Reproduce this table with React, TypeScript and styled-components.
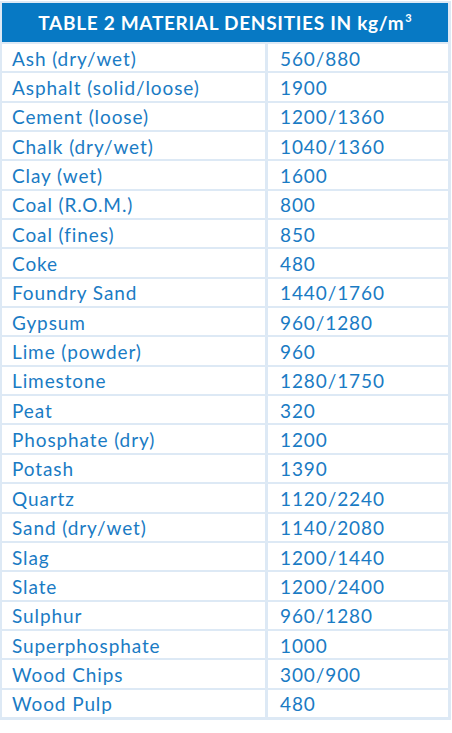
import styled, { createGlobalStyle } from "styled-components";

const rows: [string, string][] = [
  ["Ash (dry/wet)", "560/880"],
  ["Asphalt (solid/loose)", "1900"],
  ["Cement (loose)", "1200/1360"],
  ["Chalk (dry/wet)", "1040/1360"],
  ["Clay (wet)", "1600"],
  ["Coal (R.O.M.)", "800"],
  ["Coal (fines)", "850"],
  ["Coke", "480"],
  ["Foundry Sand", "1440/1760"],
  ["Gypsum", "960/1280"],
  ["Lime (powder)", "960"],
  ["Limestone", "1280/1750"],
  ["Peat", "320"],
  ["Phosphate (dry)", "1200"],
  ["Potash", "1390"],
  ["Quartz", "1120/2240"],
  ["Sand (dry/wet)", "1140/2080"],
  ["Slag", "1200/1440"],
  ["Slate", "1200/2400"],
  ["Sulphur", "960/1280"],
  ["Superphosphate", "1000"],
  ["Wood Chips", "300/900"],
  ["Wood Pulp", "480"],
];

export default function App() {
  return (
    <>
      <GlobalStyle />
      <Table>
        <Header>
          TABLE 2 MATERIAL DENSITIES IN kg/m<sup>3</sup>
        </Header>
        {rows.map(([name, value]) => (
          <Row key={name}>
            <Cell>{name}</Cell>
            <Cell $value>{value}</Cell>
          </Row>
        ))}
      </Table>
    </>
  );
}

const GlobalStyle = createGlobalStyle`
  body {
    margin: 0;
    background: #ffffff;
    font-family: Lato, "Open Sans", sans-serif;
  }
`;

const Table = styled.div`
  width: 446px;
  display: flex;
  flex-direction: column;
  gap: 2px;
  padding: 2px 3px 3px 2px;
  background: #dde9f5;
  margin-top: 1px;
`;

const Header = styled.div`
  height: 39px;
  display: flex;
  align-items: center;
  justify-content: center;
  background: #0779c4;
  color: #ffffff;
  font-weight: 700;
  font-size: 19px;
  letter-spacing: 0.7px;

  sup {
    font-size: 11px;
    align-self: flex-start;
    margin-top: 8px;
    margin-left: 1px;
    letter-spacing: 0;
  }
`;

const Row = styled.div`
  display: grid;
  grid-template-columns: 263px 1fr;
  gap: 3px;
  height: 27.35px;
`;

const Cell = styled.div<{ $value?: boolean }>`
  background: #ffffff;
  color: #1a7bc4;
  font-size: 19px;
  letter-spacing: 0.9px;
  display: flex;
  align-items: center;
  padding-top: 1px;
  padding-left: ${(p) => (p.$value ? "12px" : "10px")};
  white-space: nowrap;
`;
